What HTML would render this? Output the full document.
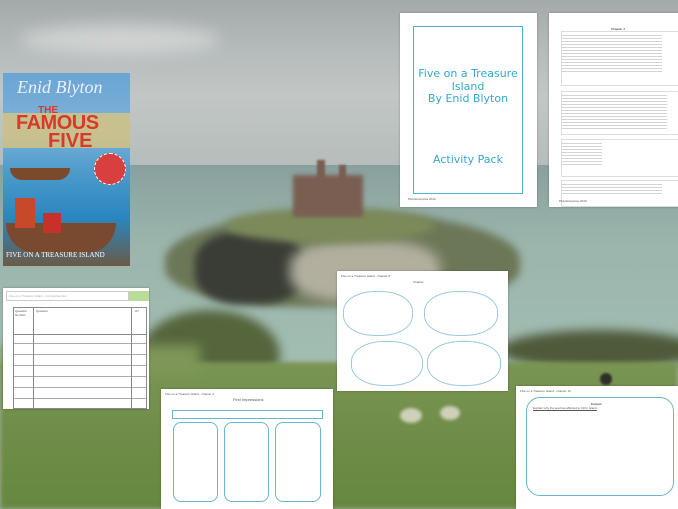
<!DOCTYPE html>
<html><head><meta charset="utf-8"><style>
*{margin:0;padding:0;box-sizing:border-box}
body{width:678px;height:509px;overflow:hidden;position:relative;font-family:"Liberation Sans",sans-serif;background:#a9b3b1}
.abs{position:absolute}
.page{position:absolute;background:#fff;box-shadow:0 0 2px rgba(0,0,0,.3);overflow:hidden}
.t{position:absolute;font-size:3px;color:#555;white-space:nowrap}
.ln{position:absolute;background:repeating-linear-gradient(#fff 0 2px,#d4d4d4 2px 3px)}
</style></head><body>
<div class="abs" style="left:0;top:0;width:678px;height:175px;background:linear-gradient(#a4a9aa,#b6bcbc 30%,#c2c7c5 55%,#b4bbb9)"></div>
<div class="abs" style="left:20px;top:25px;width:200px;height:30px;border-radius:50%;background:#cfd2d1;filter:blur(8px)"></div>
<div class="abs" style="left:0;top:165px;width:678px;height:200px;background:linear-gradient(#8aa09d,#9bb5ac 40%,#a2bdb2)"></div>
<!-- island -->
<div class="abs" style="left:165px;top:212px;width:355px;height:95px;border-radius:50% 50% 40% 40%;background:#6c7758;filter:blur(4px)"></div>
<div class="abs" style="left:195px;top:232px;width:110px;height:72px;border-radius:40%;background:#3a3d36;filter:blur(4px)"></div>
<div class="abs" style="left:290px;top:240px;width:150px;height:62px;border-radius:40%;background:#b2af9f;filter:blur(6px)"></div>
<div class="abs" style="left:225px;top:208px;width:210px;height:35px;border-radius:50%;background:#7c8a5a;filter:blur(4px)"></div>
<div class="abs" style="left:293px;top:175px;width:70px;height:42px;background:#7a5e52;filter:blur(2px)"></div>
<div class="abs" style="left:317px;top:160px;width:8px;height:22px;background:#7a5e52;filter:blur(1px)"></div>
<div class="abs" style="left:339px;top:165px;width:7px;height:15px;background:#7a5e52;filter:blur(1px)"></div>
<div class="abs" style="left:140px;top:310px;width:140px;height:90px;border-radius:50%;background:#55653c;filter:blur(5px)"></div>
<div class="abs" style="left:500px;top:330px;width:200px;height:40px;border-radius:50%;background:#4f5a3a;filter:blur(5px)"></div>
<div class="abs" style="left:0;top:362px;width:678px;height:147px;background:linear-gradient(#7a9554,#6f8d48 50%,#668840);filter:blur(2px)"></div>
<div class="abs" style="left:0;top:345px;width:200px;height:30px;background:#7e9758;filter:blur(6px)"></div>
<div class="abs" style="left:400px;top:408px;width:22px;height:15px;border-radius:50%;background:#cfd0b9;filter:blur(1.5px)"></div>
<div class="abs" style="left:440px;top:406px;width:20px;height:14px;border-radius:50%;background:#cfd0b9;filter:blur(1.5px)"></div>
<div class="abs" style="left:600px;top:373px;width:12px;height:12px;border-radius:50%;background:#2d3028;filter:blur(1px)"></div>

<!-- book cover -->
<div class="abs" style="left:3px;top:73px;width:127px;height:193px;background:linear-gradient(#6aa5d5,#7fb2d8 30%,#4f9ccc 50%,#2a86c0 75%,#6b5a48);overflow:hidden">
 <div class="abs" style="left:14px;top:4px;font-family:'Liberation Serif',serif;font-style:italic;font-size:18px;color:#eef">Enid Blyton</div>
 <div class="abs" style="left:0;top:40px;width:127px;height:35px;background:#e8c870;opacity:.7"></div>
 <div class="abs" style="left:35px;top:32px;font-weight:bold;font-size:10px;color:#d83a2a">THE</div>
 <div class="abs" style="left:13px;top:39px;font-weight:bold;font-size:20px;color:#d83a2a;letter-spacing:-.5px">FAMOUS</div>
 <div class="abs" style="left:45px;top:57px;font-weight:bold;font-size:20px;color:#d83a2a">FIVE</div>
 <div class="abs" style="left:91px;top:80px;width:32px;height:32px;border-radius:50%;background:#d84040;border:1px dashed #fff"></div>
 <div class="abs" style="left:7px;top:95px;width:60px;height:12px;background:#7a4a2a;border-radius:0 0 20px 20px"></div>
 <div class="abs" style="left:3px;top:150px;width:110px;height:30px;background:#7a4a30;border-radius:0 0 30px 30px"></div>
 <div class="abs" style="left:12px;top:125px;width:20px;height:30px;background:#c8482a"></div>
 <div class="abs" style="left:40px;top:140px;width:18px;height:20px;background:#c8302a"></div>
 <div class="abs" style="left:3px;top:178px;font-family:'Liberation Serif',serif;font-size:7px;color:#fff">FIVE ON A TREASURE ISLAND</div>
</div>

<!-- title page -->
<div class="page" style="left:400px;top:13px;width:137px;height:194px">
 <div class="abs" style="left:13px;top:13px;width:110px;height:168px;border:1px solid #4ab4cc"></div>
 <div class="abs" style="left:13px;top:55px;width:110px;text-align:center;font-family:'DejaVu Sans',sans-serif;font-size:11px;line-height:12.5px;color:#35a8c8">Five on a Treasure<br>Island<br>By Enid Blyton</div>
 <div class="abs" style="left:13px;top:140px;width:110px;text-align:center;font-family:'DejaVu Sans',sans-serif;font-size:11px;color:#35a8c8">Activity Pack</div>
 <div class="t" style="left:8px;top:184px">PAA Enterprise 2019</div>
</div>
<!-- chapter page -->
<div class="page" style="left:549px;top:13px;width:132px;height:194px">
 <div class="t" style="left:62px;top:14px;font-weight:bold">Chapter 4</div>
 <div class="abs" style="left:12px;top:18px;width:118px;height:55px;border:1px solid #ddd"></div>
 <div class="ln" style="left:13px;top:20px;width:100px;height:40px"></div>
 <div class="abs" style="left:12px;top:78px;width:118px;height:44px;border:1px solid #ddd"></div>
 <div class="ln" style="left:13px;top:80px;width:105px;height:38px"></div>
 <div class="abs" style="left:12px;top:126px;width:118px;height:38px;border:1px solid #ddd"></div>
 <div class="ln" style="left:13px;top:128px;width:40px;height:26px"></div>
 <div class="abs" style="left:12px;top:167px;width:118px;height:27px;border:1px solid #ddd"></div>
 <div class="ln" style="left:13px;top:169px;width:100px;height:12px"></div>
 <div class="t" style="left:10px;top:186px">PAA Enterprise 2019</div>
</div>

<!-- table page -->
<div class="page" style="left:3px;top:288px;width:146px;height:121px">
 <div class="abs" style="left:3px;top:3px;width:123px;height:10px;border:1px solid #ccc"></div>
 <div class="abs" style="left:126px;top:3px;width:20px;height:10px;background:#b9dc9a"></div>
 <div class="t" style="left:6px;top:6px;color:#aaa">Five on a Treasure Island - Comprehension</div>
 <div class="abs" style="left:10px;top:19px;width:134px;height:102px;border:1px solid #888;background:repeating-linear-gradient(#fff 0 10px,#aaa 10px 11px);background-position:0 -8px"></div>
 <div class="abs" style="left:10px;top:19px;width:134px;height:28px;background:#fff;border:1px solid #888"></div>
 <div class="abs" style="left:30px;top:19px;width:1px;height:102px;background:#888"></div>
 <div class="abs" style="left:128px;top:19px;width:1px;height:102px;background:#888"></div>
 <div class="t" style="left:12px;top:21px">Question<br>Number</div>
 <div class="t" style="left:33px;top:21px">Question</div>
 <div class="t" style="left:132px;top:21px">HT</div>
</div>

<!-- thought clouds -->
<div class="page" style="left:337px;top:271px;width:171px;height:120px">
 <div class="t" style="left:4px;top:3px">Five on a Treasure Island - chapter 8</div>
 <div class="t" style="left:76px;top:9px">Chapter</div>
 <div class="abs" style="left:6px;top:20px;width:70px;height:45px;border:1px solid #9cc9dc;border-radius:45%"></div>
 <div class="abs" style="left:87px;top:20px;width:74px;height:45px;border:1px solid #9cc9dc;border-radius:45%"></div>
 <div class="abs" style="left:14px;top:70px;width:72px;height:45px;border:1px solid #9cc9dc;border-radius:45%"></div>
 <div class="abs" style="left:90px;top:70px;width:74px;height:45px;border:1px solid #9cc9dc;border-radius:45%"></div>
</div>

<!-- first impressions -->
<div class="page" style="left:161px;top:389px;width:172px;height:120px">
 <div class="t" style="left:4px;top:3px">Five on a Treasure Island - chapter 2</div>
 <div class="t" style="left:72px;top:8px;font-size:4px">First Impressions</div>
 <div class="abs" style="left:11px;top:21px;width:151px;height:9px;border:1px solid #6ab6cc"></div>
 <div class="abs" style="left:12px;top:33px;width:45px;height:80px;border:1px solid #6ab6cc;border-radius:8px"></div>
 <div class="abs" style="left:63px;top:33px;width:45px;height:80px;border:1px solid #6ab6cc;border-radius:8px"></div>
 <div class="abs" style="left:114px;top:33px;width:46px;height:80px;border:1px solid #6ab6cc;border-radius:8px"></div>
</div>

<!-- chapter 16 -->
<div class="page" style="left:516px;top:386px;width:162px;height:123px">
 <div class="t" style="left:4px;top:3px">Five on a Treasure Island - chapter 16</div>
 <div class="abs" style="left:10px;top:11px;width:148px;height:99px;border:1px solid #6ab6cc;border-radius:14px"></div>
 <div class="t" style="left:75px;top:16px;font-weight:bold">Explain</div>
 <div class="t" style="left:17px;top:20px;text-decoration:underline">Explain why the sea has affected to Kirrin Island</div>
</div>
</body></html>
